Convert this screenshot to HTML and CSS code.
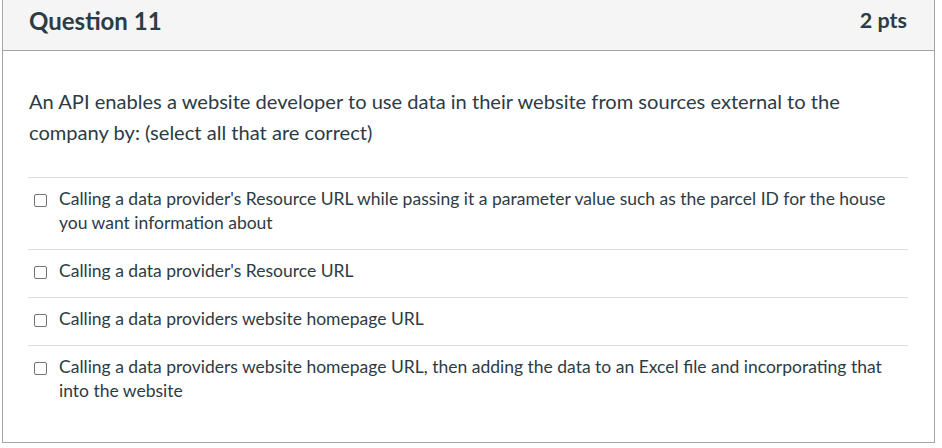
FILE: index.html
```html
<!DOCTYPE html>
<html lang="en">
<head>
    <meta charset="UTF-8">
    <meta name="viewport" content="width=device-width, initial-scale=1.0">
    <title>Question 11</title>
    <link rel="stylesheet" href="styles.css">
</head>
<body>

    <!-- Question Card -->
    <div class="question-card">
        <div class="question-header">
            <h2 class="question-title">Question 11</h2>
            <span class="question-points">2 pts</span>
        </div>

        <div class="question-body">
            <p class="question-text">An API enables a website developer to use data in their website from sources external to the company by: (select all that are correct)</p>

            <div class="answers">
                <label class="answer">
                    <input type="checkbox" class="answer-check">
                    <span class="answer-text">Calling a data provider's Resource URL while passing it a parameter value such as the parcel ID for the house you want information about</span>
                </label>
                <label class="answer">
                    <input type="checkbox" class="answer-check">
                    <span class="answer-text">Calling a data provider's Resource URL</span>
                </label>
                <label class="answer">
                    <input type="checkbox" class="answer-check">
                    <span class="answer-text">Calling a data providers website homepage URL</span>
                </label>
                <label class="answer">
                    <input type="checkbox" class="answer-check">
                    <span class="answer-text">Calling a data providers website homepage URL, then adding the data to an Excel file and incorporating that into the website</span>
                </label>
            </div>
        </div>
    </div>

</body>
</html>
```

FILE: styles.css
```css
/* General Reset */
* {
    margin: 0;
    padding: 0;
    box-sizing: border-box;
}

body {
    font-family: 'Lato', 'Helvetica Neue', Arial, sans-serif;
    background-color: #ffffff;
    color: #2d3b45;
    overflow: hidden;
}

/* Question Card */
.question-card {
    width: 933px;
    margin-left: 2px;
    border: 1px solid #a5a5a5;
    border-top: none;
    background-color: #ffffff;
}

/* Header */
.question-header {
    display: flex;
    justify-content: space-between;
    align-items: center;
    height: 51px;
    padding: 0 27px 0 26px;
    background-color: #f5f5f5;
    border-bottom: 1px solid #a5a5a5;
}

.question-title {
    font-size: 24px;
    font-weight: bold;
    color: #2d3b45;
    margin-top: -10px;
}

.question-points {
    font-size: 21.5px;
    font-weight: bold;
    color: #2d3b45;
    margin-top: -10px;
}

/* Body */
.question-body {
    padding: 35px 26px 25px 25px;
}

.question-text {
    font-size: 20.1px;
    line-height: 31px;
    color: #2d3b45;
    margin-bottom: 29px;
    padding-left: 1px;
}

/* Answers */
.answer {
    display: flex;
    align-items: flex-start;
    gap: 12px;
    border-top: 1px solid #dddddd;
    padding: 9px 0 14px 6px;
    cursor: pointer;
}

.answer-check {
    appearance: none;
    width: 13px;
    height: 13px;
    margin-top: 7px;
    flex-shrink: 0;
    border: 1px solid #737373;
    border-radius: 2px;
    background-color: #ffffff;
}

.answer-text {
    font-size: 17.5px;
    line-height: 24px;
    color: #2d3b45;
}
```
